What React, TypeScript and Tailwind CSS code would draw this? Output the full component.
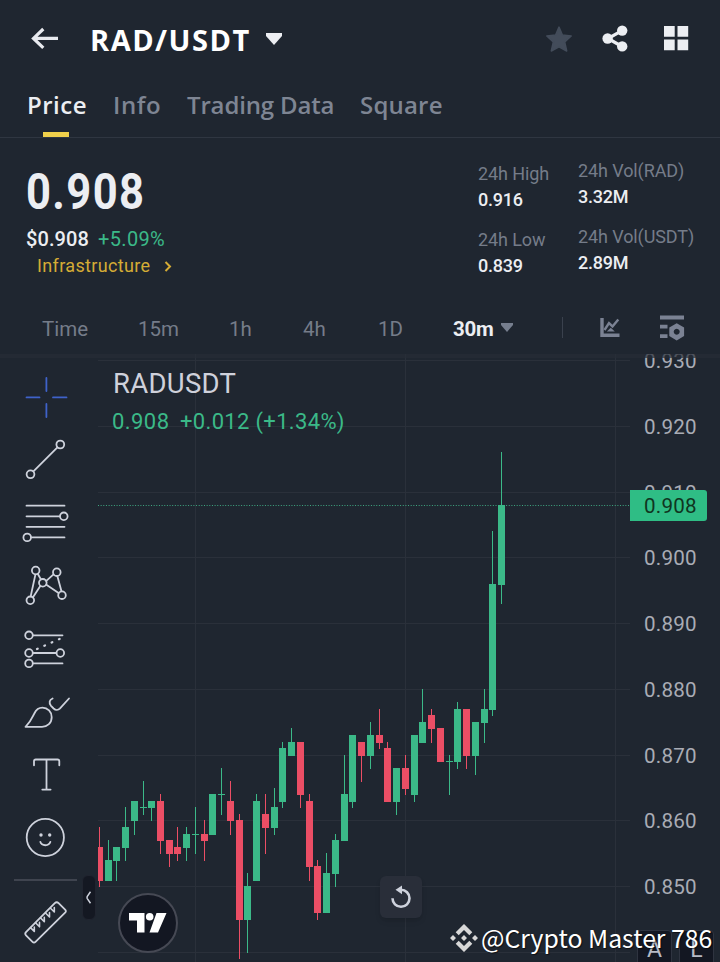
import type { ReactNode } from 'react';

// [high, body top, body bottom, low, direction], prices in thousandths
type Candle = [number, number, number, number, 'up' | 'down'];

const CANDLES: Candle[] = [
  [859, 856, 851, 850, 'down'],
  [857, 854, 851, 851, 'up'],
  [856, 856, 854, 851, 'up'],
  [862, 859, 856, 854, 'up'],
  [863, 863, 860, 858, 'up'],
  [866, 862, 862, 861, 'up'],
  [863, 863, 862, 860, 'up'],
  [864, 863, 857, 855, 'down'],
  [857, 857, 855, 853, 'down'],
  [859, 856, 855, 854, 'down'],
  [859, 858, 856, 854, 'up'],
  [862, 858, 858, 855, 'up'],
  [860, 858, 857, 854, 'down'],
  [864, 864, 858, 858, 'up'],
  [868, 864, 864, 861, 'up'],
  [866, 863, 860, 858, 'down'],
  [861, 860, 845, 839, 'down'],
  [852, 850, 845, 840, 'up'],
  [864, 863, 851, 851, 'up'],
  [864, 861, 859, 855, 'down'],
  [865, 862, 859, 858, 'up'],
  [872, 871, 863, 862, 'up'],
  [874, 872, 870, 870, 'up'],
  [872, 872, 864, 862, 'down'],
  [864, 863, 853, 851, 'down'],
  [854, 853, 846, 845, 'down'],
  [855, 852, 846, 846, 'up'],
  [858, 857, 852, 850, 'up'],
  [870, 864, 857, 857, 'up'],
  [873, 873, 863, 862, 'up'],
  [872, 872, 870, 866, 'down'],
  [875, 873, 870, 868, 'up'],
  [877, 873, 872, 871, 'down'],
  [872, 871, 863, 863, 'down'],
  [868, 868, 863, 861, 'up'],
  [870, 868, 865, 864, 'down'],
  [873, 873, 864, 863, 'up'],
  [880, 875, 872, 872, 'up'],
  [877, 876, 874, 872, 'down'],
  [874, 874, 869, 869, 'down'],
  [870, 869, 869, 864, 'up'],
  [878, 877, 869, 868, 'up'],
  [877, 877, 870, 868, 'down'],
  [875, 875, 870, 867, 'up'],
  [880, 877, 875, 872, 'up'],
  [904, 896, 877, 876, 'up'],
  [916, 908, 896, 893, 'up'],
];

const PRICE_LINES = [930, 920, 910, 900, 890, 880, 870, 860, 850, 840];
const TIME_LINES = [195, 405, 615];

const toY = (price: number) => Math.round(557.4 + (900 - price) * 6.575);
const toX = (index: number) => Math.floor(99.28 + index * 8.745);

function CandleChart() {
  return (
    <svg width="622" height="608" viewBox="98 354 622 608" className="block shrink-0" shapeRendering="crispEdges">
      {PRICE_LINES.map((p) => (
        <rect key={p} x="98" y={toY(p)} width="532" height="1" fill="#2a303a" />
      ))}
      {TIME_LINES.map((x) => (
        <rect key={x} x={x} y="354" width="1" height="608" fill="#2a303a" />
      ))}
      <path d="M98 505.5H630" stroke="#3fa882" strokeWidth="1" strokeDasharray="1 1.65" shapeRendering="auto" />
      {CANDLES.map(([high, top, bottom, low, dir], i) => {
        const x = toX(i);
        const fill = dir === 'up' ? '#3bb988' : '#eb4e65';
        return (
          <g key={i} fill={fill}>
            <rect x={x} y={toY(high)} width="1" height={toY(low) - toY(high) + 1} />
            <rect x={x - 3} y={toY(top)} width="7" height={toY(bottom) - toY(top) + 1} />
          </g>
        );
      })}
      <g fontFamily="Roboto, sans-serif" fontSize="20.6" fill="#a9acb5" shapeRendering="auto">
        {PRICE_LINES.slice(0, 9).map((p) => (
          <text key={p} x="644" y={toY(p) + 8} textLength="52.5">
            {(p / 1000).toFixed(3)}
          </text>
        ))}
        <path d="M630 490h74a3 3 0 0 1 3 3v25a3 3 0 0 1-3 3h-74z" fill="#2fbd85" />
        <text x="644" y="513" textLength="52.5" fill="#10351f">0.908</text>
      </g>
      <g fontFamily="Roboto, sans-serif" shapeRendering="auto">
        <text x="113" y="393" fontSize="27.5" textLength="123" fill="#cfd1db">RADUSDT</text>
        <text x="112" y="429" fontSize="22" textLength="57" fill="#3bb988">0.908</text>
        <text x="180" y="429" fontSize="22" textLength="164.5" fill="#3bb988">+0.012 (+1.34%)</text>
      </g>
    </svg>
  );
}

function Tool({ children, color = '#ced2dc' }: { children: ReactNode; color?: string }) {
  return (
    <button className="block h-[63px] w-14">
      <svg
        width="56"
        height="63"
        viewBox="0 0 56 63"
        fill="none"
        stroke={color}
        strokeWidth="1.8"
        strokeLinecap="round"
        strokeLinejoin="round"
      >
        {children}
      </svg>
    </button>
  );
}

function Toolbar() {
  return (
    <div className="w-[98px] shrink-0 pt-3 pl-[18px]">
      <Tool color="#3f62c9">
        <path d="M28.4 12v13M28.4 38v13M8.5 31.4H21.5M35 31.4H48.5" />
      </Tool>
      <Tool>
        <path d="M15.4 42.4 39.4 18.4" />
        <circle cx="42.3" cy="15.5" r="3.9" />
        <circle cx="12.5" cy="45.3" r="3.9" />
      </Tool>
      <Tool>
        <path d="M8.5 13.7H46.5M8.5 24.3H41.5M8.5 34.8H46.5M13 45.4H46.5" />
        <circle cx="45.8" cy="24.3" r="3.8" />
        <circle cx="9.2" cy="45.4" r="3.8" />
      </Tool>
      <Tool>
        <path d="M17.4 19.6 12.7 41.3M19.7 18.8l3 5.2M22.3 31 15 42.2M28.3 25.8l7.2-6.4M39.4 21.2l4 14.8M28.4 29.8l12.2 8.2" />
        <circle cx="17.7" cy="15.5" r="3.8" />
        <circle cx="38.8" cy="17.2" r="3.8" />
        <circle cx="24.8" cy="27.8" r="3.8" />
        <circle cx="12.3" cy="45.3" r="3.8" />
        <circle cx="44" cy="40.2" r="3.8" />
      </Tool>
      <Tool>
        <path d="M15 17.3H44.5M15 35H38.3M15 45.4H44.5" />
        <path d="M19 31 43 20.3" strokeDasharray=".8 7.2" strokeWidth="2.2" />
        <circle cx="11" cy="17.3" r="3.8" />
        <circle cx="11" cy="35" r="3.8" />
        <circle cx="42.3" cy="35" r="3.8" />
        <circle cx="11" cy="45.4" r="3.8" />
      </Tool>
      <Tool>
        <path d="M7.5 45.8C13 40.5 14.5 36 16.3 32.5 18 29 21 26.7 24.4 26.7A9.3 9.3 0 0 1 33.7 36.2C33.7 41.8 29.5 45.8 24 45.8Z" />
        <path d="M34.6 17.5C31.3 19 30.8 21.8 32.8 24.6L35.6 27.5C37.4 29.2 40.2 29.3 41.8 27.7L51 17.5" />
      </Tool>
      <Tool>
        <path d="M16 21.3V17.3Q16 15.5 17.8 15.5H39.5Q41.3 15.5 41.3 17.3V21.3M28.5 15.5V45.6M24.3 45.6H32.6" />
      </Tool>
      <Tool>
        <circle cx="27.3" cy="30.5" r="18.6" />
        <path d="M22.3 34.8C23.6 39.4 31 39.4 32.4 34.8" />
        <circle cx="23" cy="28" r="1.7" fill="#ced2dc" stroke="none" />
        <circle cx="31.7" cy="28" r="1.7" fill="#ced2dc" stroke="none" />
      </Tool>
      <div className="mt-[9px] mb-[10px] -ml-1 h-0.5 w-[63px] bg-[#3f444f]" />
      <Tool>
        <path d="M36.8 12.2Q38.7 10.3 40.6 12.2L47.1 18.7Q48.6 20.2 47.1 21.7L17.5 50.8Q16 52.3 14.5 50.8L8 44.3Q6.5 42.7 8 41.1Z" />
        <path d="M12.5 36.6l3.8 3.8V36M17.5 31.8l4 4V31.4M22.5 26.9l3.8 3.8V26.4M27.5 22l4 4V21.6M32.5 17.2l3.8 3.8V16.6" strokeWidth="1.6" />
      </Tool>
    </div>
  );
}

function Header() {
  return (
    <header className="flex h-[78px] items-center pl-[30px]">
      <svg width="30" height="24" viewBox="0 0 30 24" fill="none" stroke="#e8eaef" strokeWidth="3.2">
        <path d="M13.3 2 3.5 11.4l9.8 9.4M3.5 11.4H28" />
      </svg>
      <h1 className="mt-0.5 ml-[30px] w-[161px] text-[29px] font-bold tracking-[1.5px] whitespace-nowrap text-white">
        RAD/USDT
      </h1>
      <svg width="16" height="12" viewBox="0 0 16 12" className="ml-[15px]" fill="#eceef2">
        <path d="M0 0H16V3L8 12 0 3Z" />
      </svg>
      <svg width="28" height="28" viewBox="0 0 28 28" className="ml-[263px]" fill="#434c5a" stroke="#434c5a" strokeWidth="1.5" strokeLinejoin="round">
        <path d="M14 2.1l3.4 8 8.8.9-6.5 6 2 9L14 21.8 6.3 26l2-9-6.5-6 8.8-.9Z" />
      </svg>
      <svg width="28" height="28" viewBox="0 0 28 28" className="ml-[28px]" fill="#eceef2">
        <path d="M21 5.6 7 13.5l14 8" fill="none" stroke="#eceef2" strokeWidth="3.2" />
        <circle cx="21.2" cy="5.6" r="5.2" />
        <circle cx="6.6" cy="13.5" r="5.2" />
        <circle cx="21.2" cy="21.4" r="5.2" />
      </svg>
      <svg width="25" height="25" viewBox="0 0 25 25" className="mb-px ml-[35px]" fill="#eceef2">
        <path d="M0 0h10.7v10.7H0zM13.5 0h10.7v10.7H13.5zM0 13.5h10.7v10.7H0zM13.5 13.5h10.7v10.7H13.5z" />
      </svg>
    </header>
  );
}

function Tabs() {
  return (
    <nav className="flex h-[60px] items-start border-b border-[#2f3641] pl-[27px] text-2xl font-semibold text-[#7e8593]">
      <span className="flex h-full w-[86px] flex-col justify-between">
        <span className="mt-[11px] tracking-[0.5px] text-[#eceef2]">Price</span>
        <span className="ml-4 h-[5px] w-[26px] bg-[#f0d04b]" />
      </span>
      <span className="mt-[11px] w-[74px] tracking-[0.6px]">Info</span>
      <span className="mt-[11px] w-[173px] tracking-[-0.15px] whitespace-nowrap">Trading Data</span>
      <span className="mt-[11px] tracking-[0.2px]">Square</span>
    </nav>
  );
}

function Stat({ label, value }: { label: string; value: string }) {
  return (
    <div className="h-[66px] whitespace-nowrap">
      <div className="h-[26px] text-[18px] leading-[26px] tracking-[-0.1px] text-[#757c89]">{label}</div>
      <div className="text-[18px] leading-[26px] font-medium tracking-[-0.25px] text-[#eceef2]">{value}</div>
    </div>
  );
}

function Summary() {
  return (
    <section className="flex h-[167px] font-[Roboto,sans-serif]">
      <div className="w-[478px] pt-[26px] pl-[26px]">
        <div className="origin-left scale-x-[0.87] text-[50px] leading-[57px] font-bold tracking-[1.6px] text-[#eceef2]">
          0.908
        </div>
        <div className="mt-[6px] flex gap-2 text-[20px] leading-6">
          <span className="font-medium tracking-[0.1px] text-[#eceef2]">$0.908</span>
          <span className="pl-px tracking-[0.35px] text-[#3bb988]">+5.09%</span>
        </div>
        <div className="mt-[2px] flex items-center pl-[11px] text-[18px] leading-[26px] tracking-[0.35px] text-[#d5ac35]">
          Infrastructure
          <svg width="8" height="11" viewBox="0 0 8 11" className="ml-3.5" fill="none" stroke="#d5ac35" strokeWidth="2">
            <path d="M1.5 1 6 5.5 1.5 10" />
          </svg>
        </div>
      </div>
      <div className="w-[100px] pt-[23px]">
        <Stat label="24h High" value="0.916" />
        <Stat label="24h Low" value="0.839" />
      </div>
      <div className="pt-5">
        <Stat label="24h Vol(RAD)" value="3.32M" />
        <Stat label="24h Vol(USDT)" value="2.89M" />
      </div>
    </section>
  );
}

function Intervals() {
  return (
    <section className="flex h-[49px] items-center pl-[42px] font-[Roboto,sans-serif] text-[20.5px] text-[#757c89]">
      <span className="w-[96px]">Time</span>
      <span className="w-[91px]">15m</span>
      <span className="w-[74px]">1h</span>
      <span className="w-[75px]">4h</span>
      <span className="w-[75px]">1D</span>
      <span className="w-[48px] font-bold tracking-[-0.3px] text-[#eceef2]">30m</span>
      <svg width="12" height="10" viewBox="0 0 12 10" className="mb-1" fill="#767e8e">
        <path d="M0 0H12V2L6 9 0 2Z" />
      </svg>
      <span className="mb-1 ml-[49px] h-[21px] w-px bg-[#3a414d]" />
      <svg width="20" height="20" viewBox="0 0 20 20" className="mb-[3px] ml-[37px]" fill="none" stroke="#7b8293">
        <path d="M2 0V17.2H19.5" strokeWidth="3.4" />
        <path d="M4.5 12 9 5.2l3.5 3.2L18.3 1.5" strokeWidth="2.4" />
        <path d="M6.8 13.5 10.8 9.8l4 3.7z" fill="#7b8293" stroke="none" />
      </svg>
      <svg width="25" height="26" viewBox="0 0 25 26" className="mb-[3px] ml-[40px]" fill="#7b8293">
        <path d="M0 .5H24V4.5H0zM0 9.7H7.5V13.5H0zM0 19.3H7.5V23.1H0z" />
        <path fillRule="evenodd" d="M16.7 8.2l7.4 4.3v8.6l-7.4 4.3-7.4-4.3v-8.6zM16.7 13.8a3 3 0 1 0 .01 0z" />
      </svg>
    </section>
  );
}

export default function App() {
  return (
    <main className="relative h-[962px] w-[720px] overflow-hidden bg-[#1f2630] font-['Open_Sans',sans-serif]">
      <Header />
      <Tabs />
      <Summary />
      <Intervals />
      <section className="flex h-[608px]">
        <Toolbar />
        <CandleChart />
      </section>
      <div className="absolute top-[354px] left-0 h-1 w-full bg-[#262c36]/70" />

      {/* Overlays on the chart canvas */}
      <button className="absolute top-[875px] left-[82px] flex h-[45px] w-3.5 items-center justify-center rounded-md border border-[#20242f] bg-[#141822]">
        <svg width="6" height="13" viewBox="0 0 6 13" className="shrink-0" fill="none" stroke="#ced2dc" strokeWidth="1.5">
          <path d="M4.5 .8 1.3 5.4Q.8 6.5 1.3 7.6L4.5 12.2" />
        </svg>
      </button>
      <div className="absolute top-[893px] left-[118px] flex size-[60px] items-center justify-center rounded-full border-2 border-[#464954] bg-[#131722]">
        <svg width="38" height="20" viewBox="0 0 38 20" fill="#fff">
          <path d="M0 0H15.5V19.5H8V7.5H0zM27.5 0H37.5L29 19.5H20.5z" />
          <circle cx="20.7" cy="3.8" r="3.8" />
        </svg>
      </div>
      <button className="absolute top-[876px] left-[380px] flex size-[42px] items-center justify-center rounded-md bg-[#292e39] shadow-md">
        <svg width="20" height="24" viewBox="0 0 20 24" fill="none" stroke="#ced2dc" strokeWidth="2.6">
          <path d="M1.5 13.3A8.5 8.5 0 1 0 10 4.8" />
          <path d="M4.5 4.8 11 .4V9.2Z" fill="#ced2dc" stroke="none" />
        </svg>
      </button>
      <div className="absolute top-[930px] left-[637px] flex gap-[7px] font-[Roboto,sans-serif] text-[23px] leading-[38px] text-[#b6bac5]">
        <span className="h-9 w-[35px] rounded border border-[#2f3440] bg-[#131722] text-center">A</span>
        <span className="h-9 w-[35px] rounded border border-[#2f3440] bg-[#131722] text-center">L</span>
      </div>
      <div className="absolute top-[919px] left-[450px] flex items-center whitespace-nowrap text-white [text-shadow:1px_1px_1px_rgba(0,0,0,.6)]">
        <svg width="28" height="28" viewBox="0 0 28 28" className="mt-0.5" fill="#d8d8d8">
          <path d="M14 0 22.3 8.3 19.3 11.3 14 6 8.7 11.3 5.7 8.3ZM14 28 22.3 19.7 19.3 16.7 14 22 8.7 16.7 5.7 19.7ZM14 11 17 14 14 17 11 14ZM3 11 6 14 3 17 0 14ZM25 11 28 14 25 17 22 14Z" />
        </svg>
        <span className="ml-[3px] font-['Noto_Sans_CJK_SC',sans-serif] text-[24.8px] leading-9">@Crypto Master 786</span>
      </div>
    </main>
  );
}
